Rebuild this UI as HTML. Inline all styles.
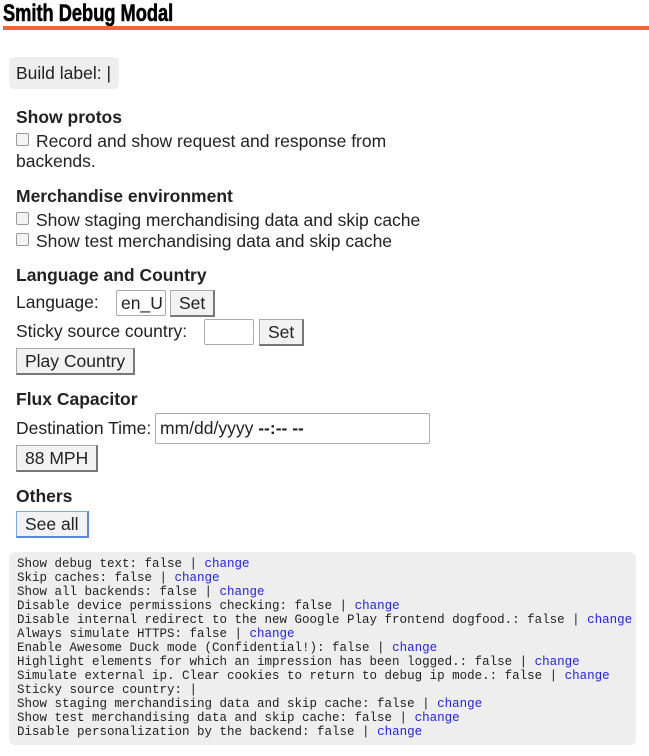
<!DOCTYPE html>
<html><head><meta charset="utf-8"><style>
body{margin:0;width:649px;height:756px;background:#fff;font-family:"Liberation Sans",Arial,sans-serif;font-size:17.5px;color:#222;position:relative;overflow:hidden}
.a{position:absolute;white-space:nowrap}
.t{left:3px;top:0px;font-family:"Liberation Sans Narrow","Liberation Sans",sans-serif;font-weight:bold;font-size:24px;color:#000;transform:scaleX(.76);transform-origin:0 0;-webkit-text-stroke:.6px #000}
.line{left:3px;top:26px;width:646px;height:4px;background:#f4623a}
.bl{left:9px;top:57px;width:110px;height:32px;background:#eee;border-radius:5px}
.h{font-weight:bold;left:16px}
.cb{display:inline-block;width:11px;height:11px;border:1px solid #999;border-radius:2px;background:#f3f3f3;margin-right:7px;vertical-align:1px}
.btn{border:1px solid #aaa;border-right:2px solid #777;border-bottom:2px solid #777;background:#f2f2f2;padding:0 8px;box-sizing:border-box;height:27px;line-height:24px}
.inp{border:1px solid #aaa;border-radius:2px;background:#fff;box-sizing:border-box;height:26px;line-height:24px;padding-left:4px;overflow:hidden}
.pre{left:9px;top:552px;width:627px;height:193px;background:#eee;border-radius:6px}
.m{position:absolute;left:17px;top:557px;font-family:"Liberation Mono",monospace;font-size:12.5px;line-height:14px;color:#222;white-space:pre}
.m a{color:#22e;text-decoration:none}
</style></head><body>
<div class="a t">Smith Debug Modal</div>
<div class="a line"></div>
<div class="a bl"></div><div class="a" style="left:16px;top:63px">Build label: |</div>
<div class="a h" style="top:107px">Show protos</div>
<div class="a" style="left:16px;top:131px"><span class="cb"></span>Record and show request and response from</div>
<div class="a" style="left:16px;top:151px">backends.</div>
<div class="a h" style="top:186px">Merchandise environment</div>
<div class="a" style="left:16px;top:210px"><span class="cb"></span>Show staging merchandising data and skip cache</div>
<div class="a" style="left:16px;top:231px"><span class="cb"></span>Show test merchandising data and skip cache</div>
<div class="a h" style="top:265px">Language and Country</div>
<div class="a" style="left:16px;top:292px">Language:</div>
<div class="a inp" style="left:116px;top:290px;width:50px">en_U</div>
<div class="a btn" style="left:170px;top:290px">Set</div>
<div class="a" style="left:16px;top:321px">Sticky source country:</div>
<div class="a inp" style="left:204px;top:319px;width:50px"></div>
<div class="a btn" style="left:259px;top:319px">Set</div>
<div class="a btn" style="left:16px;top:348px">Play Country</div>
<div class="a h" style="top:389px">Flux Capacitor</div>
<div class="a" style="left:16px;top:418px">Destination Time:</div>
<div class="a inp" style="left:155px;top:413px;width:275px;height:31px;line-height:29px;color:#222">mm/dd/yyyy <b>--:-- --</b></div>
<div class="a btn" style="left:16px;top:445px">88 MPH</div>
<div class="a h" style="top:486px">Others</div>
<div class="a btn" style="left:16px;top:511px;border-color:#7aa7e8;border-right-color:#5b8bd6;border-bottom-color:#5b8bd6">See all</div>
<div class="a pre"></div>
<div class="m">Show debug text: false | <a>change</a>
Skip caches: false | <a>change</a>
Show all backends: false | <a>change</a>
Disable device permissions checking: false | <a>change</a>
Disable internal redirect to the new Google Play frontend dogfood.: false | <a>change</a>
Always simulate HTTPS: false | <a>change</a>
Enable Awesome Duck mode (Confidential!): false | <a>change</a>
Highlight elements for which an impression has been logged.: false | <a>change</a>
Simulate external ip. Clear cookies to return to debug ip mode.: false | <a>change</a>
Sticky source country: |
Show staging merchandising data and skip cache: false | <a>change</a>
Show test merchandising data and skip cache: false | <a>change</a>
Disable personalization by the backend: false | <a>change</a></div>
</body></html>
